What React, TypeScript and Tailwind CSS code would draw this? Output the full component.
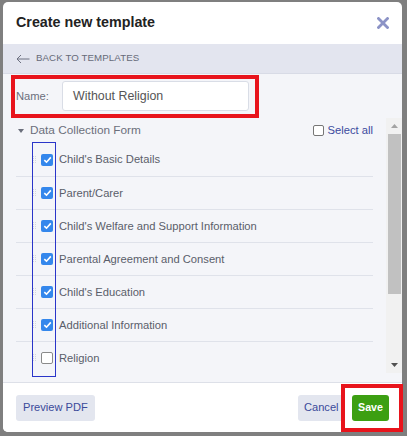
import React from 'react';

const sections = [
  { label: "Child's Basic Details", checked: true },
  { label: 'Parent/Carer', checked: true },
  { label: "Child's Welfare and Support Information", checked: true },
  { label: 'Parental Agreement and Consent', checked: true },
  { label: "Child's Education", checked: true },
  { label: 'Additional Information', checked: true },
  { label: 'Religion', checked: false },
];

function DragDots() {
  return (
    <svg width="3" height="8" viewBox="0 0 3 8" className="shrink-0">
      {[0, 2, 4, 6].map((y) => (
        <g key={y}>
          <rect x="0" y={y} width="1" height="1" fill="#d3d6de" />
          <rect x="2" y={y} width="1" height="1" fill="#d3d6de" />
        </g>
      ))}
    </svg>
  );
}

function Checkbox({ checked }: { checked: boolean }) {
  if (checked) {
    return (
      <span className="w-[12px] h-[12px] rounded-[2px] bg-[#3487ec] flex items-center justify-center shrink-0">
        <svg width="9" height="8" viewBox="0 0 9 8">
          <path d="M1.3 4.2 L3.5 6.2 L7.8 1.4" fill="none" stroke="#fff" strokeWidth="1.6" />
        </svg>
      </span>
    );
  }
  return <span className="w-[12px] h-[12px] rounded-[2px] bg-white border border-[#8a8a8a] shrink-0" />;
}

export default function App() {
  return (
    <div
      className="w-[407px] h-[436px] bg-[#7f7f7f] pt-[2px] pl-[3px] overflow-hidden relative"
      style={{ fontFamily: '"Liberation Sans", Arial, sans-serif' }}
    >
      <div className="w-[399px] h-[430px] bg-white rounded-[5px] overflow-hidden flex flex-col relative">
        {/* header */}
        <div className="h-[42px] flex items-center justify-between px-[13px] shrink-0">
          <h1 className="text-[14.3px] font-bold text-[#222]">Create new template</h1>
          <svg width="12" height="12" viewBox="0 0 12 12" className="mr-[0px]">
            <path d="M1.5 1.5 L10.5 10.5 M10.5 1.5 L1.5 10.5" stroke="#8c93c6" strokeWidth="2.8" strokeLinecap="square" />
          </svg>
        </div>

        {/* back bar */}
        <div className="h-[30px] bg-[#e3e5ef] border-b border-[#d8dbe6] flex items-center gap-[6px] px-[13px] shrink-0">
          <svg width="14" height="10" viewBox="0 0 14 10">
            <path d="M13.5 5 H1 M5 1 L1 5 L5 9" fill="none" stroke="#6d7080" strokeWidth="1" />
          </svg>
          <span className="text-[9.7px] uppercase text-[#666a78] tracking-[0.1px]">Back to templates</span>
        </div>

        {/* body */}
        <div className="flex-1 bg-[#f4f5f9] flex flex-col min-h-0">
          <div className="h-[44px] flex items-center px-[13px] gap-[12px] shrink-0">
            <span className="text-[11.2px] text-[#6b6f7c] w-[34px]">Name:</span>
            <div className="w-[187px] h-[30px] bg-white border border-[#d9dde6] rounded-[3px] flex items-center px-[10px] text-[12.4px] text-[#555]">
              Without Religion
            </div>
          </div>

          <div className="h-[255px] flex shrink-0">
            <div className="flex-1 px-[13px] overflow-hidden">
              <div className="h-[25px] flex items-center justify-between">
                <div className="flex items-center gap-[6px] pl-[2px]">
                  <svg width="6" height="4" viewBox="0 0 6 4">
                    <path d="M0 0 H6 L3 4 Z" fill="#6b6f7c" />
                  </svg>
                  <span className="text-[11.8px] text-[#6b6f7c]">Data Collection Form</span>
                </div>
                <div className="flex items-center gap-[4px]">
                  <span className="w-[11px] h-[11px] rounded-[2px] bg-white border border-[#767676]" />
                  <span className="text-[11.2px] text-[#3b4a9e]">Select all</span>
                </div>
              </div>
              {sections.map((s, i) => (
                <div
                  key={s.label}
                  className={
                    'h-[33px] flex items-center pl-[17px] gap-[5px] ' +
                    (i > 0 ? 'border-t border-[#dfe2ea]' : '')
                  }
                >
                  <DragDots />
                  <Checkbox checked={s.checked} />
                  <span className="text-[11.2px] text-[#5a5e6a] ml-[1px]">{s.label}</span>
                </div>
              ))}
            </div>

            {/* scrollbar */}
            <div className="w-[16px] bg-[#f1f1f1] flex flex-col items-center shrink-0">
              <div className="h-[16px] flex items-center justify-center">
                <svg width="7" height="4" viewBox="0 0 7 4">
                  <path d="M0 4 H7 L3.5 0 Z" fill="#a3a3a3" />
                </svg>
              </div>
              <div className="w-[13px] h-[160px] bg-[#c1c1c1] ml-[1px]" />
              <div className="flex-1" />
              <div className="h-[16px] flex items-center justify-center">
                <svg width="7" height="4" viewBox="0 0 7 4">
                  <path d="M0 0 H7 L3.5 4 Z" fill="#505050" />
                </svg>
              </div>
            </div>
          </div>
        </div>

        {/* footer */}
        <div className="h-[50px] border-t border-[#dde0e8] bg-white flex items-center justify-between px-[13px] shrink-0">
          <button className="h-[26px] px-[7px] rounded-[3px] bg-[#e3e6ef] text-[11.1px] text-[#3a4a9a]">Preview PDF</button>
          <div className="flex items-center gap-[7px]">
            <button className="h-[26px] px-[6px] w-[47px] text-left rounded-[3px] bg-[#e3e6ef] text-[11.1px] text-[#3a4a9a]">
              Cancel
            </button>
            <button className="h-[26px] w-[37px] rounded-[3px] bg-[#3c9f12] text-[10.7px] font-bold text-white">Save</button>
          </div>
        </div>

        {/* annotations */}
        <div className="absolute left-[8px] top-[73px] w-[248px] h-[43px] border-[4px] border-[#e8141c]" />
        <div className="absolute left-[29px] top-[140px] w-[24px] h-[235px] border border-[#2a35c9]" />
      </div>
      <div className="absolute left-[341px] top-[384px] w-[62px] h-[48px] border-[4px] border-[#e8141c]" />
    </div>
  );
}
